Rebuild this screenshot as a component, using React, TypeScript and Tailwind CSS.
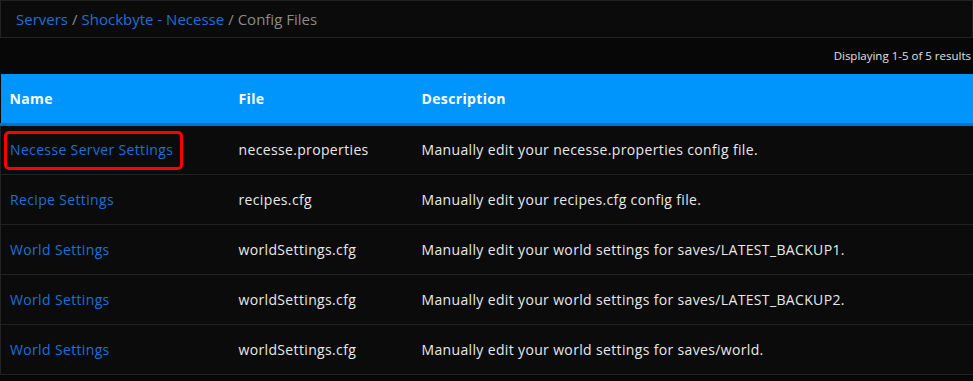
import React from 'react';

type Row = { name: string; file: string; desc: string; flagged?: boolean };

const rows: Row[] = [
  { name: 'Necesse Server Settings', file: 'necesse.properties', desc: 'Manually edit your necesse.properties config file.', flagged: true },
  { name: 'Recipe Settings', file: 'recipes.cfg', desc: 'Manually edit your recipes.cfg config file.' },
  { name: 'World Settings', file: 'worldSettings.cfg', desc: 'Manually edit your world settings for saves/LATEST_BACKUP1.' },
  { name: 'World Settings', file: 'worldSettings.cfg', desc: 'Manually edit your world settings for saves/LATEST_BACKUP2.' },
  { name: 'World Settings', file: 'worldSettings.cfg', desc: 'Manually edit your world settings for saves/world.' },
];

export default function App() {
  return (
    <div className="w-[973px] h-[381px] overflow-hidden bg-[#070707] text-[#e8e8e8] font-['Open_Sans',sans-serif]">
      {/* breadcrumb */}
      <div className="h-[38px] flex items-center pl-[15px] bg-[#0b0b0b] border border-[#222] text-[15px]">
        <a className="text-[#1c70d8]">Servers</a>
        <span className="mx-1 text-[#8a8a8a]">/</span>
        <a className="text-[#1c70d8]">Shockbyte - Necesse</a>
        <span className="mx-1 text-[#8a8a8a]">/</span>
        <span className="text-[#8a8a8a]">Config Files</span>
      </div>

      <div className="h-[36px] flex items-center justify-end pr-0.5 text-[11.5px] text-[#e0e0e0]">
        Displaying 1-5 of 5 results
      </div>

      <table className="w-[975px] border-collapse text-[14px] tracking-[0.35px]">
        <thead>
          <tr className="bg-[#0094fd] border-b-[3px] border-[#0070c2] text-white font-bold">
            <th className="h-[50px] w-[229px] text-left pl-[9px]">Name</th>
            <th className="w-[183px] text-left pl-[9px]">File</th>
            <th className="text-left pl-[9px]">Description</th>
          </tr>
        </thead>
        <tbody>
          {rows.map((r, i) => (
            <tr key={i} className="bg-[#0b0b0b] border-b border-l border-[#222]">
              <td className="h-[50px] pl-[9px] relative">
                {r.flagged && (
                  <span className="absolute left-[3px] top-[5px] w-[179px] h-[39px] border-[3px] border-[#f00] rounded-[5px]" />
                )}
                <a className="relative text-[#1c70d8]">{r.name}</a>
              </td>
              <td className="pl-[9px]">{r.file}</td>
              <td className="pl-[9px]">{r.desc}</td>
            </tr>
          ))}
        </tbody>
      </table>
    </div>
  );
}
